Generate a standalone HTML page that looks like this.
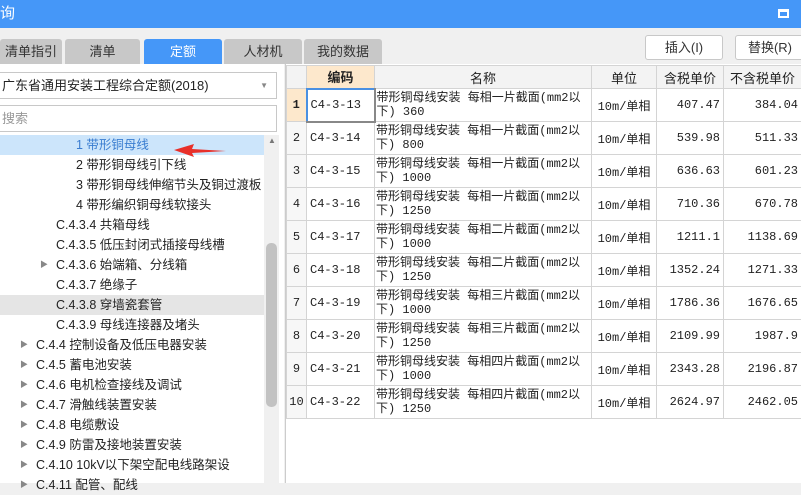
<!DOCTYPE html>
<html><head><meta charset="utf-8"><style>
*{margin:0;padding:0;box-sizing:border-box}
body{width:801px;height:483px;overflow:hidden;background:#f0f0f0;font-family:"Liberation Sans","Noto Sans CJK SC",sans-serif;position:relative;font-size:13px;color:#222}
.abs{position:absolute}
.title{left:0;top:0;width:801px;height:28px;background:#4597f8;color:#fff;font-size:15px;line-height:28px}
.tab{top:39px;height:25px;background:#c8c8c8;border-radius:3px 3px 0 0;text-align:center;line-height:25px;font-size:13px;color:#333}
.btn{top:35px;height:25px;background:#fff;border:1px solid #c8c8c8;border-radius:3px;text-align:center;line-height:23px;font-size:13px;color:#333}
.left{left:0;top:64px;width:284px;height:419px;background:#fff}
.box{left:0;width:277px;border:1px solid #c8c8c8;border-left:none;background:#fff;font-size:13px;padding-left:2px}
.tr{left:0;width:264px;height:20px;line-height:20px;font-size:12.5px;white-space:nowrap;color:#222;overflow:hidden}
.ar{position:absolute;color:#888;font-size:8px;top:0}
table{border-collapse:collapse;font-family:"Liberation Mono","Noto Sans CJK SC",monospace;font-size:12px}
td,th{border:1px solid #d4d4d4;height:33px;padding:0 3px;overflow:hidden;white-space:nowrap}
th{height:23px;font-weight:normal;background:#f3f3f3;font-family:"Liberation Sans","Noto Sans CJK SC",sans-serif;font-size:13px}
td.n{text-align:center;background:#f7f7f7;font-size:12px;padding:0}
td.r{text-align:right}
td.c{text-align:center}
td.nm{line-height:14px;vertical-align:top;padding-top:2px;padding-left:1px}
</style></head><body>
<div class="abs title"><span>询</span><span class="abs" style="left:778px;top:9px;width:11px;height:9px;border:2px solid #fff;border-top-width:3px"></span></div>

<div class="abs tab" style="left:0;width:62px">清单指引</div>
<div class="abs tab" style="left:65px;width:75px">清单</div>
<div class="abs tab" style="left:144px;width:78px;background:#4597f8;color:#fff">定额</div>
<div class="abs tab" style="left:224px;width:78px">人材机</div>
<div class="abs tab" style="left:304px;width:78px">我的数据</div>
<div class="abs btn" style="left:645px;width:78px">插入(I)</div>
<div class="abs btn" style="left:735px;width:70px">替换(R)</div>

<div class="abs left"></div>
<div class="abs box" style="top:72px;height:27px;line-height:26px">广东省通用安装工程综合定额(2018)<span class="abs" style="right:8px;top:0;color:#888;font-size:8px">▼</span></div>
<div class="abs box" style="top:105px;height:27px;line-height:26px;color:#999">搜索</div>

<div class="abs" style="left:0;top:135px;width:264px;height:20px;background:#cce5fb"></div>
<div class="abs" style="left:0;top:295px;width:264px;height:20px;background:#e5e5e5"></div>
<div class="abs tr" style="top:135px;padding-left:76px;color:#3a7dd0">1 带形铜母线</div>
<svg class="abs" style="left:172px;top:142px" width="56" height="16"><path d="M2 8 L22 2 L20 7 L54 9 L20 11 L22 15 Z" fill="#e8302a"/></svg>
<div class="abs tr" style="top:155px;padding-left:76px">2 带形铜母线引下线</div>
<div class="abs tr" style="top:175px;padding-left:76px">3 带形铜母线伸缩节头及铜过渡板</div>
<div class="abs tr" style="top:195px;padding-left:76px">4 带形编织铜母线软接头</div>
<div class="abs tr" style="top:215px;padding-left:56px">C.4.3.4 共箱母线</div>
<div class="abs tr" style="top:235px;padding-left:56px">C.4.3.5 低压封闭式插接母线槽</div>
<div class="abs tr" style="top:255px;padding-left:56px"><span class="ar" style="left:40px">▶</span>C.4.3.6 始端箱、分线箱</div>
<div class="abs tr" style="top:275px;padding-left:56px">C.4.3.7 绝缘子</div>
<div class="abs tr" style="top:295px;padding-left:56px">C.4.3.8 穿墙瓷套管</div>
<div class="abs tr" style="top:315px;padding-left:56px">C.4.3.9 母线连接器及堵头</div>
<div class="abs tr" style="top:335px;padding-left:36px"><span class="ar" style="left:20px">▶</span>C.4.4 控制设备及低压电器安装</div>
<div class="abs tr" style="top:355px;padding-left:36px"><span class="ar" style="left:20px">▶</span>C.4.5 蓄电池安装</div>
<div class="abs tr" style="top:375px;padding-left:36px"><span class="ar" style="left:20px">▶</span>C.4.6 电机检查接线及调试</div>
<div class="abs tr" style="top:395px;padding-left:36px"><span class="ar" style="left:20px">▶</span>C.4.7 滑触线装置安装</div>
<div class="abs tr" style="top:415px;padding-left:36px"><span class="ar" style="left:20px">▶</span>C.4.8 电缆敷设</div>
<div class="abs tr" style="top:435px;padding-left:36px"><span class="ar" style="left:20px">▶</span>C.4.9 防雷及接地装置安装</div>
<div class="abs tr" style="top:455px;padding-left:36px"><span class="ar" style="left:20px">▶</span>C.4.10 10kV以下架空配电线路架设</div>
<div class="abs tr" style="top:475px;padding-left:36px"><span class="ar" style="left:20px">▶</span>C.4.11 配管、配线</div>

<div class="abs" style="left:264px;top:135px;width:15px;height:348px;background:#f0f0f0"></div>
<div class="abs" style="left:268px;top:136px;color:#777;font-size:8px">▲</div>
<div class="abs" style="left:266px;top:243px;width:11px;height:164px;background:#c2c2c2;border-radius:5px"></div>

<div class="abs" style="left:285px;top:64px;width:516px;height:419px;background:#fff;border-left:1px solid #ccc"></div>
<table class="abs" style="left:286px;top:65px;width:515px;table-layout:fixed">
<colgroup><col style="width:20px"><col style="width:68px"><col style="width:217px"><col style="width:65px"><col style="width:67px"><col style="width:78px"></colgroup>
<tr><th></th><th style="background:#fde8cc;font-weight:bold">编码</th><th>名称</th><th>单位</th><th>含税单价</th><th>不含税单价</th></tr>
<tr><td class="n" style="background:#fde8cc;font-weight:bold">1</td><td style="border:2px solid #4a90e2;border-right-color:#888;border-bottom-color:#888">C4-3-13</td><td class="nm">带形铜母线安装 每相一片截面(mm2以<br>下) 360</td><td class="c">10m/单相</td><td class="r">407.47</td><td class="r">384.04</td></tr>
<tr><td class="n">2</td><td>C4-3-14</td><td class="nm">带形铜母线安装 每相一片截面(mm2以<br>下) 800</td><td class="c">10m/单相</td><td class="r">539.98</td><td class="r">511.33</td></tr>
<tr><td class="n">3</td><td>C4-3-15</td><td class="nm">带形铜母线安装 每相一片截面(mm2以<br>下) 1000</td><td class="c">10m/单相</td><td class="r">636.63</td><td class="r">601.23</td></tr>
<tr><td class="n">4</td><td>C4-3-16</td><td class="nm">带形铜母线安装 每相一片截面(mm2以<br>下) 1250</td><td class="c">10m/单相</td><td class="r">710.36</td><td class="r">670.78</td></tr>
<tr><td class="n">5</td><td>C4-3-17</td><td class="nm">带形铜母线安装 每相二片截面(mm2以<br>下) 1000</td><td class="c">10m/单相</td><td class="r">1211.1</td><td class="r">1138.69</td></tr>
<tr><td class="n">6</td><td>C4-3-18</td><td class="nm">带形铜母线安装 每相二片截面(mm2以<br>下) 1250</td><td class="c">10m/单相</td><td class="r">1352.24</td><td class="r">1271.33</td></tr>
<tr><td class="n">7</td><td>C4-3-19</td><td class="nm">带形铜母线安装 每相三片截面(mm2以<br>下) 1000</td><td class="c">10m/单相</td><td class="r">1786.36</td><td class="r">1676.65</td></tr>
<tr><td class="n">8</td><td>C4-3-20</td><td class="nm">带形铜母线安装 每相三片截面(mm2以<br>下) 1250</td><td class="c">10m/单相</td><td class="r">2109.99</td><td class="r">1987.9</td></tr>
<tr><td class="n">9</td><td>C4-3-21</td><td class="nm">带形铜母线安装 每相四片截面(mm2以<br>下) 1000</td><td class="c">10m/单相</td><td class="r">2343.28</td><td class="r">2196.87</td></tr>
<tr><td class="n">10</td><td>C4-3-22</td><td class="nm">带形铜母线安装 每相四片截面(mm2以<br>下) 1250</td><td class="c">10m/单相</td><td class="r">2624.97</td><td class="r">2462.05</td></tr>
</table>
</body></html>
